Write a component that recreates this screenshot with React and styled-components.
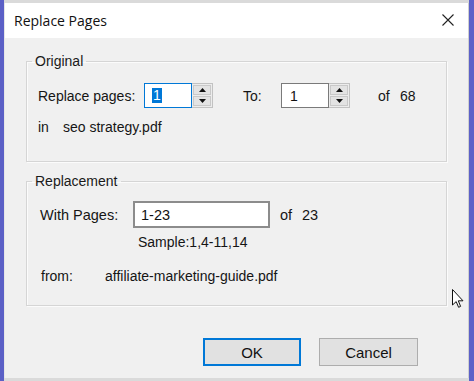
import React from 'react';
import styled, { createGlobalStyle } from 'styled-components';

const GlobalStyle = createGlobalStyle`
  * {
    box-sizing: border-box;
  }

  html, body {
    margin: 0;
    padding: 0;
  }

  body {
    background: #dadada;
    font-family: 'Liberation Sans', Arial, sans-serif;
    font-size: 14px;
    color: #111;
    overflow: hidden;
  }
`;

const Screen = styled.div`
  position: relative;
  width: 474px;
  height: 381px;
  padding: 3px 0;
  background: #dadada;
  border-left: 4px solid #5b60c6;
  border-right: 5px solid #5c61c8;
  display: flex;
`;

const Dialog = styled.div`
  flex: 1;
  display: flex;
  flex-direction: column;
  background: #f0f0f0;
  border-left: 1px solid #e6e6e6;
  border-right: 1px solid #cfcfcf;
`;

const TitleBar = styled.div`
  height: 35px;
  flex-shrink: 0;
  background: #fff;
  display: flex;
  align-items: center;
  justify-content: space-between;
  padding: 0 14px 1px 9px;
`;

const Title = styled.div`
  font-family: 'Open Sans', 'Noto Sans', sans-serif;
  font-size: 14px;
  color: #111;
`;

const CloseIcon = styled.svg`
  width: 12px;
  height: 12px;
  display: block;
`;

const Body = styled.div`
  flex: 1;
  display: flex;
  flex-direction: column;
  padding: 15px 21px 0;
`;

const GroupBox = styled.fieldset`
  margin: ${p => p.$mt || 0}px 0 0;
  padding: ${p => p.$pad};
  min-width: 0;
  border: 1px solid #d5d5d5;
  box-shadow: inset 1px 1px 0 #fbfbfb, 1px 1px 0 #fbfbfb;
  display: flex;
  flex-direction: column;
`;

const Legend = styled.legend`
  margin-left: -6px;
  padding: 0 3px;
  font-size: 14px;
  line-height: 16px;
  color: #1a1a1a;
`;

const Row = styled.div`
  display: flex;
  align-items: center;
  height: ${p => p.$h || 16}px;
  margin-top: ${p => p.$mt || 0}px;
  padding-left: ${p => p.$indent || 0}px;
  line-height: 16px;
`;

const Label = styled.span`
  flex-shrink: 0;
  width: ${p => (p.$w ? `${p.$w}px` : 'auto')};
  margin-left: ${p => p.$ml || 0}px;
  font-size: ${p => p.$size || 14}px;
  white-space: nowrap;
  color: #151515;
`;

const Spin = styled.div`
  display: flex;
  height: 25px;
  flex-shrink: 0;
`;

const SpinField = styled.div`
  width: 48px;
  height: 100%;
  background: #fff;
  border: 1px solid ${p => (p.$focused ? '#0078d7' : '#7a7a7a')};
  display: flex;
  align-items: center;
  padding-left: ${p => (p.$focused ? 7 : 8)}px;
  font-size: 14px;
`;

const Selected = styled.span`
  background: #0078d7;
  color: #fff;
  padding: 0 1px;
  line-height: 15px;
`;

const SpinButtons = styled.div`
  width: 21px;
  height: 100%;
  display: flex;
  flex-direction: column;
  gap: 1px;
  padding: 1px;
  background: #ececec;
  border: 1px solid #c2c2c2;
  border-left: none;
`;

const SpinButton = styled.div`
  flex: 1;
  display: flex;
  align-items: center;
  justify-content: center;
  background: #e3e3e3;
  border: 1px solid #c9c9c9;
`;

const Arrow = styled.svg`
  width: 7px;
  height: 4px;
  display: block;
`;

const TextInput = styled.div`
  width: 137px;
  height: 27px;
  flex-shrink: 0;
  background: #fff;
  border: 2px solid #8c8c8c;
  display: flex;
  align-items: center;
  padding-left: 6px;
  font-size: 14.5px;
`;

const ButtonRow = styled.div`
  display: flex;
  justify-content: flex-end;
  gap: 18px;
  margin-top: 32px;
  padding-right: 29px;
`;

const Button = styled.button`
  width: ${p => p.$w}px;
  height: 28px;
  margin: 0;
  padding: 0;
  background: #e1e1e1;
  border: ${p => (p.$primary ? '2px solid #0078d7' : '1px solid #adadad')};
  font-family: 'Liberation Sans', Arial, sans-serif;
  font-size: 15px;
  color: #111;
`;

const Cursor = styled.svg`
  position: absolute;
  left: 448px;
  top: 289px;
  width: 12px;
  height: 20px;
`;

function SpinBox({ value, focused }) {
  return (
    <Spin>
      <SpinField $focused={focused}>
        {focused ? <Selected>{value}</Selected> : value}
      </SpinField>
      <SpinButtons>
        <SpinButton>
          <Arrow viewBox="0 0 7 4">
            <polygon points="0,4 3.5,0 7,4" fill="#111" />
          </Arrow>
        </SpinButton>
        <SpinButton>
          <Arrow viewBox="0 0 7 4">
            <polygon points="0,0 7,0 3.5,4" fill="#111" />
          </Arrow>
        </SpinButton>
      </SpinButtons>
    </Spin>
  );
}

export default function App() {
  return (
    <>
      <GlobalStyle />
      <Screen>
        <Dialog>
          <TitleBar>
            <Title>Replace Pages</Title>
            <CloseIcon viewBox="0 0 12 12">
              <path d="M0.5 0.5 L11.5 11.5 M11.5 0.5 L0.5 11.5" stroke="#222" strokeWidth="1.1" />
            </CloseIcon>
          </TitleBar>

          <Body>
            <GroupBox $pad="14px 11px 26px">
              <Legend>Original</Legend>
              <Row $h={25}>
                <Label $w={106}>Replace pages:</Label>
                <SpinBox value="1" focused />
                <Label $w={38} $ml={30}>To:</Label>
                <SpinBox value="1" />
                <Label $w={22} $ml={28}>of</Label>
                <Label>68</Label>
              </Row>
              <Row $mt={11}>
                <Label $w={25}>in</Label>
                <Label>seo strategy.pdf</Label>
              </Row>
            </GroupBox>

            <GroupBox $mt={11} $pad="12px 11px 21px">
              <Legend>Replacement</Legend>
              <Row $h={27} $indent={2}>
                <Label $w={93} $size={14.5}>With Pages:</Label>
                <TextInput>1-23</TextInput>
                <Label $w={22} $ml={10} $size={14.5}>of</Label>
                <Label $size={14.5}>23</Label>
              </Row>
              <Row $mt={6} $indent={100}>
                <Label>Sample:1,4-11,14</Label>
              </Row>
              <Row $mt={18} $indent={3}>
                <Label $w={64}>from:</Label>
                <Label>affiliate-marketing-guide.pdf</Label>
              </Row>
            </GroupBox>

            <ButtonRow>
              <Button $w={98} $primary>OK</Button>
              <Button $w={99}>Cancel</Button>
            </ButtonRow>
          </Body>
        </Dialog>

        <Cursor viewBox="0 0 12 20">
          <path
            d="M0.5 0.5 L0.5 16 L4.2 12.6 L6.6 18.3 L8.6 17.4 L6.3 11.8 L11 11.8 Z"
            fill="#fff"
            stroke="#111"
            strokeWidth="1"
            strokeLinejoin="round"
          />
        </Cursor>
      </Screen>
    </>
  );
}
